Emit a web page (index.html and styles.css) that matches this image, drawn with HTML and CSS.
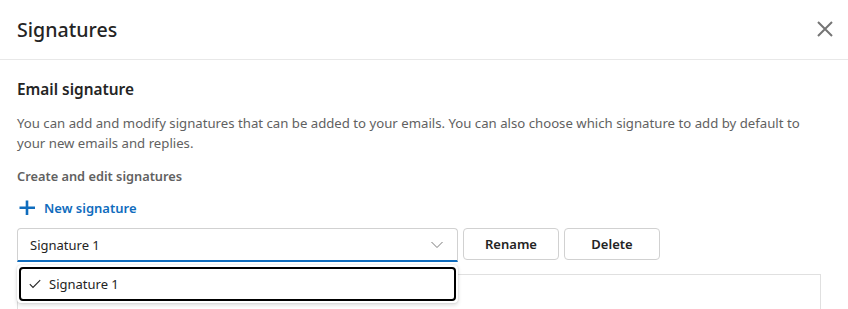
FILE: index.html
```html
<!DOCTYPE html>
<html lang="en">
<head>
<meta charset="utf-8">
<title>Signatures</title>
<link rel="stylesheet" href="styles.css">
</head>
<body>
<div class="dialog">
  <header class="dialog-header">
    <h1 class="dialog-title">Signatures</h1>
    <button class="close-btn" aria-label="Close">
      <svg width="16" height="16" viewBox="0 0 16 16"><path d="M1 1 L15 15 M15 1 L1 15" stroke="#757575" stroke-width="2" fill="none"/></svg>
    </button>
  </header>
  <main class="dialog-body">
    <h2 class="section-title">Email signature</h2>
    <p class="section-desc">You can add and modify signatures that can be added to your emails. You can also choose which signature to add by default to your new emails and replies.</p>
    <div class="sub-title">Create and edit signatures</div>
    <button class="link-btn">
      <svg width="16" height="16" viewBox="0 0 16 16"><path d="M8 0.5 V15 M0.5 7.8 H16" stroke="#0f6cbd" stroke-width="2.6" fill="none"/></svg>
      <span>New signature</span>
    </button>
    <div class="controls">
      <div class="select">
        <span class="select-value">Signature 1</span>
        <svg class="chevron" width="12" height="12" viewBox="0 0 12 12"><path d="M0.5 3 L6 8.5 L11.5 3" stroke="#7a7a7a" stroke-width="1" fill="none"/></svg>
      </div>
      <button class="btn">Rename</button>
      <button class="btn">Delete</button>
    </div>
    <div class="editor-area">
      <div class="editor"></div>
      <div class="listbox">
        <div class="option">
          <svg class="check" width="12" height="10" viewBox="0 0 12 10"><path d="M0.8 5.2 L4 8.4 L11.2 1.2" stroke="#242424" stroke-width="1.1" fill="none"/></svg>
          <span>Signature 1</span>
        </div>
      </div>
    </div>
  </main>
</div>
</body>
</html>
```
FILE: styles.css
```css
* { box-sizing: border-box; }
html, body { margin: 0; padding: 0; background: #fff; }
body {
  font-family: "Noto Sans", "Open Sans", sans-serif;
  color: #242424;
  width: 848px;
  height: 309px;
  overflow: hidden;
}
.dialog { width: 848px; }
.dialog-header {
  display: flex;
  align-items: center;
  justify-content: space-between;
  height: 60px;
  padding: 0 15px 0 17px;
  border-bottom: 1px solid #e8e8e8;
}
.dialog-title {
  margin: 0;
  font-size: 19.6px;
  font-weight: 500;
  line-height: 28px;
}
.close-btn {
  background: none;
  border: 0;
  padding: 0;
  width: 16px;
  height: 16px;
  display: flex;
  margin-bottom: 2px;
}
.dialog-body { padding: 20px 27px 0 17px; }
.section-title {
  margin: 0;
  font-size: 15.4px;
  font-weight: 600;
  line-height: 20px;
}
.section-desc {
  margin: 13px 0 0;
  font-size: 13.2px;
  line-height: 20px;
  color: #616161;
}
.sub-title {
  margin-top: 14px;
  font-size: 12.8px;
  font-weight: 600;
  line-height: 18px;
  color: #616161;
}
.link-btn {
  display: flex;
  align-items: center;
  gap: 9px;
  margin-top: 13px;
  padding: 0 0 0 2px;
  background: none;
  border: 0;
  font: inherit;
  font-size: 13px;
  font-weight: 600;
  line-height: 20px;
  color: #0f6cbd;
  height: 20px;
}
.controls {
  display: flex;
  align-items: flex-start;
  gap: 5px;
  margin-top: 10px;
}
.select {
  flex: none;
  width: 441px;
  height: 34px;
  display: flex;
  align-items: center;
  justify-content: space-between;
  padding: 0 14px 0 12px;
  border: 1px solid #d1d1d1;
  border-bottom: 2px solid #0f6cbd;
  border-radius: 4px 4px 0 0;
  font-size: 13px;
}
.btn {
  width: 96px;
  height: 32px;
  background: #fff;
  border: 1px solid #d1d1d1;
  border-radius: 4px;
  font: inherit;
  font-size: 13px;
  font-weight: 600;
  color: #242424;
}
.editor-area {
  position: relative;
  margin-top: 12px;
  height: 40px;
}
.editor {
  height: 40px;
  border: 1px solid #e0e0e0;
  border-bottom: 0;
}
.listbox {
  position: absolute;
  left: 0;
  top: -9px;
  width: 441px;
  background: #fff;
  border-radius: 4px;
  box-shadow: 0 2px 4px rgba(0,0,0,0.14), 0 0 2px rgba(0,0,0,0.12);
  padding: 2px;
}
.option {
  display: flex;
  align-items: center;
  gap: 8px;
  height: 34px;
  padding: 0 10px 0 8px;
  border: 2px solid #000;
  border-radius: 4px;
  font-size: 13px;
}
.check { flex: none; }
```
